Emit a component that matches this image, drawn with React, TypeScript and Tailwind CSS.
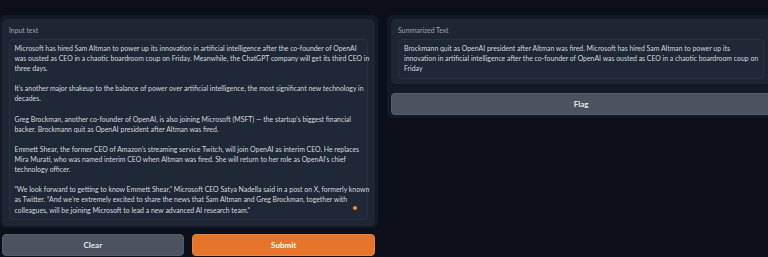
import React from "react";

const inputLines: (string | null)[] = [
  "Microsoft has hired Sam Altman to power up its innovation in artificial intelligence after the co-founder of OpenAI",
  "was ousted as CEO in a chaotic boardroom coup on Friday. Meanwhile, the ChatGPT company will get its third CEO in",
  "three days.",
  null,
  "It’s another major shakeup to the balance of power over artificial intelligence, the most significant new technology in",
  "decades.",
  null,
  "Greg Brockman, another co-founder of OpenAI, is also joining Microsoft (MSFT) — the startup’s biggest financial",
  "backer. Brockmann quit as OpenAI president after Altman was fired.",
  null,
  "Emmett Shear, the former CEO of Amazon’s streaming service Twitch, will join OpenAI as interim CEO. He replaces",
  "Mira Murati, who was named interim CEO when Altman was fired. She will return to her role as OpenAI’s chief",
  "technology officer.",
  null,
  "“We look forward to getting to know Emmett Shear,” Microsoft CEO Satya Nadella said in a post on X, formerly known",
  "as Twitter. “And we’re extremely excited to share the news that Sam Altman and Greg Brockman, together with",
  "colleagues, will be joining Microsoft to lead a new advanced AI research team.”",
];

const outputLines = [
  "Brockmann quit as OpenAI president after Altman was fired. Microsoft has hired Sam Altman to power up its",
  "innovation in artificial intelligence after the co-founder of OpenAI was ousted as CEO in a chaotic boardroom coup on",
  "Friday",
];

function Lines({ lines }: { lines: (string | null)[] }) {
  return (
    <>
      {lines.map((l, i) => (
        <div key={i} className="h-[10.1px] leading-[10.1px] whitespace-nowrap">
          {l ?? "\u00a0"}
        </div>
      ))}
    </>
  );
}

export default function App() {
  return (
    <div className="w-[768px] h-[257px] bg-[#0b0f19] pt-[15px] flex gap-[9px] font-['Lato',sans-serif] overflow-hidden">
      <div className="w-[378px] flex flex-col gap-[6px]">
        <div className="bg-[#131a27] rounded-[6px] pt-[4px] pl-[1.5px] pr-[3px] pb-[2px]">
          <div className="bg-[#1e2634] rounded-[5px] pt-[7px] px-[7px] pb-[6px]">
            <div className="text-[6.8px] leading-[8px] text-[#9ca3af] mb-[5px] pl-[0.5px]">Input text</div>
            <div className="relative bg-[#1f2836] border border-[#2a3241] rounded-[4px] pl-[5px] pr-[5px] pt-[3px] pb-[4px] text-[6.9px] text-[#d4d7dd]">
              <Lines lines={inputLines} />
              <div className="absolute right-[10px] bottom-[9px] w-[4px] h-[4px] rounded-full bg-[#f08a3a]" />
            </div>
          </div>
        </div>
        <div className="flex gap-[8px] h-[22px] pl-[1.5px] pr-[3px]">
          <button className="flex-1 rounded-[4px] bg-[#4b5361] border border-[#555d6b] text-[8px] font-bold text-[#e5e7eb]">
            Clear
          </button>
          <button className="flex-1 rounded-[4px] bg-[#e8732a] border border-[#ef8438] text-[8px] font-bold text-white">
            Submit
          </button>
        </div>
      </div>
      <div className="flex-1 self-start bg-[#131a27] rounded-l-[6px] pt-[4px] pl-[4px] pr-[3px] pb-[3px]">
        <div className="bg-[#1e2634] rounded-[5px] pt-[7px] px-[7px] pb-[5px]">
          <div className="text-[6.8px] leading-[8px] text-[#9ca3af] mb-[5px]">Summarized Text</div>
          <div className="bg-[#1f2836] border border-[#2a3241] rounded-[4px] pl-[5px] pr-[5px] pt-[3px] pb-[5px] text-[6.9px] text-[#d4d7dd]">
            <Lines lines={outputLines} />
          </div>
        </div>
        <button className="mt-[9px] w-full h-[22px] rounded-[4px] bg-[#4b5361] border border-[#555d6b] text-[8px] font-bold text-[#e5e7eb]">
          Flag
        </button>
      </div>
    </div>
  );
}
